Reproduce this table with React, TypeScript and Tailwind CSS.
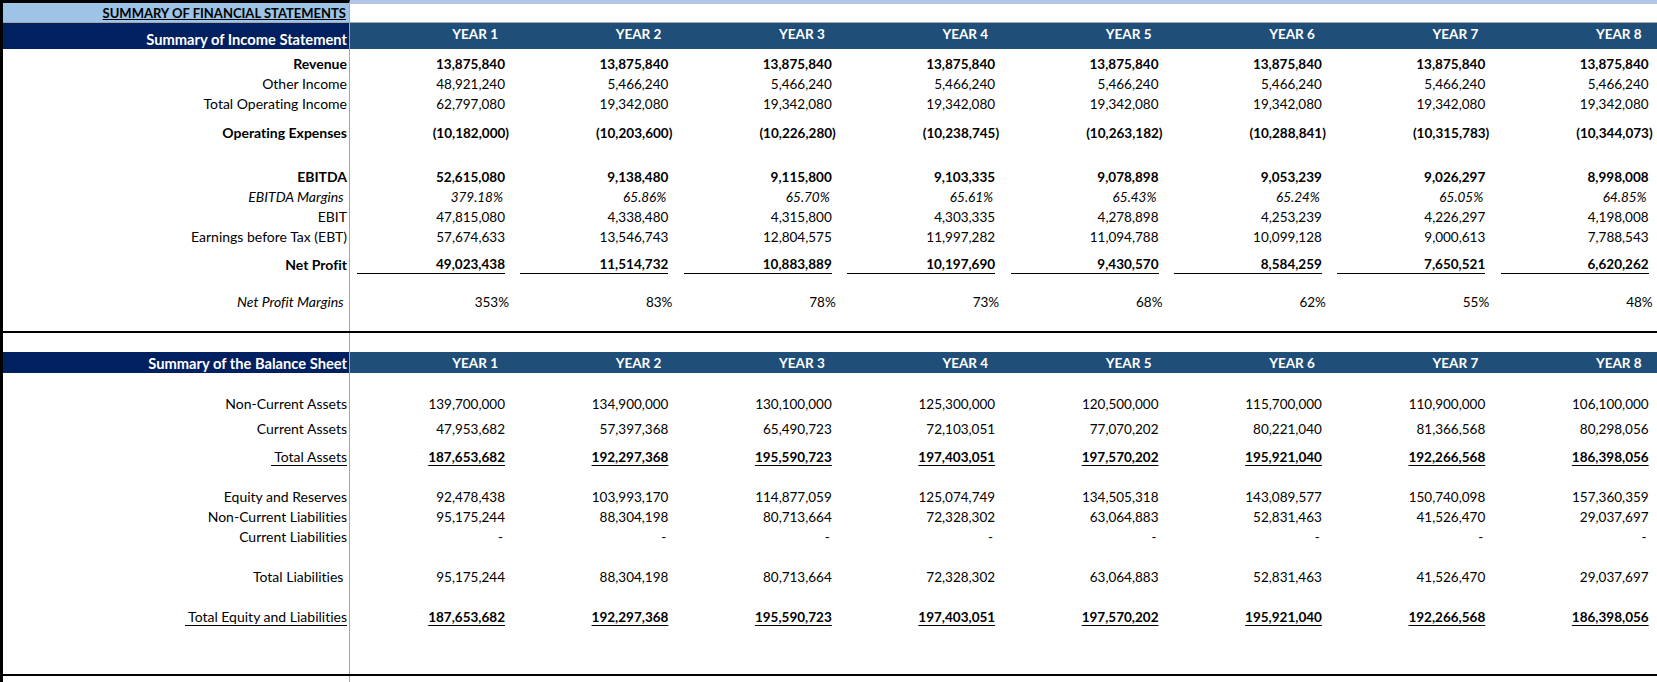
import React from "react";

const years = [1, 2, 3, 4, 5, 6, 7, 8];

interface RowProps {
  h: string;
  label?: React.ReactNode;
  labelCls?: string;
  values?: string[];
  valCls?: string;
  cellCls?: string;
}

function Row({ h, label, labelCls = "", values, valCls = "", cellCls = "" }: RowProps) {
  return (
    <div className={`flex shrink-0 ${h}`}>
      <div className={`w-[347px] shrink-0 border-r border-[#a6a6a6] flex items-center justify-end pr-[2px] whitespace-pre text-[14px] ${labelCls}`}>
        {label}
      </div>
      {values &&
        values.map((v, i) => (
          <div key={i} className="w-[163.375px] shrink-0 pl-[7px] pr-[8.375px] flex">
            <div className={`w-full flex items-center justify-end whitespace-nowrap ${cellCls}`}>
              <span className={valCls}>{v}</span>
            </div>
          </div>
        ))}
    </div>
  );
}

function Gap({ h }: { h: string }) {
  return <Row h={h} />;
}

function HeaderRow({ h, title, labelAlign, yearAlign }: { h: string; title: string; labelAlign: string; yearAlign: string }) {
  return (
    <div className={`flex shrink-0 ${h}`}>
      <div className={`w-[347px] shrink-0 bg-[#002060] border-r border-[#a6a6a6] flex justify-end pr-[2px] text-white font-bold text-[14.7px] ${labelAlign}`}>
        {title}
      </div>
      <div className="flex-1 flex bg-[#1f4e79]">
        {years.map((y) => (
          <div key={y} className="w-[163.375px] shrink-0 pl-[7px] pr-[8.375px] flex">
            <div className={`w-full flex justify-end pr-[7px] text-white font-bold ${yearAlign}`}>YEAR {y}</div>
          </div>
        ))}
      </div>
    </div>
  );
}

const rev = Array(8).fill("13,875,840");
const otherInc = ["48,921,240", ...Array(7).fill("5,466,240")];
const totInc = ["62,797,080", ...Array(7).fill("19,342,080")];
const opex = ["(10,182,000)", "(10,203,600)", "(10,226,280)", "(10,238,745)", "(10,263,182)", "(10,288,841)", "(10,315,783)", "(10,344,073)"];
const ebitda = ["52,615,080", "9,138,480", "9,115,800", "9,103,335", "9,078,898", "9,053,239", "9,026,297", "8,998,008"];
const ebitdaM = ["379.18%", "65.86%", "65.70%", "65.61%", "65.43%", "65.24%", "65.05%", "64.85%"];
const ebit = ["47,815,080", "4,338,480", "4,315,800", "4,303,335", "4,278,898", "4,253,239", "4,226,297", "4,198,008"];
const ebt = ["57,674,633", "13,546,743", "12,804,575", "11,997,282", "11,094,788", "10,099,128", "9,000,613", "7,788,543"];
const netProfit = ["49,023,438", "11,514,732", "10,883,889", "10,197,690", "9,430,570", "8,584,259", "7,650,521", "6,620,262"];
const npm = ["353%", "83%", "78%", "73%", "68%", "62%", "55%", "48%"];

const nca = ["139,700,000", "134,900,000", "130,100,000", "125,300,000", "120,500,000", "115,700,000", "110,900,000", "106,100,000"];
const ca = ["47,953,682", "57,397,368", "65,490,723", "72,103,051", "77,070,202", "80,221,040", "81,366,568", "80,298,056"];
const totAssets = ["187,653,682", "192,297,368", "195,590,723", "197,403,051", "197,570,202", "195,921,040", "192,266,568", "186,398,056"];
const equity = ["92,478,438", "103,993,170", "114,877,059", "125,074,749", "134,505,318", "143,089,577", "150,740,098", "157,360,359"];
const ncl = ["95,175,244", "88,304,198", "80,713,664", "72,328,302", "63,064,883", "52,831,463", "41,526,470", "29,037,697"];
const cl = Array(8).fill("-");

export default function App() {
  return (
    <div className="w-[1657px] h-[682px] overflow-hidden bg-white border-l-[3px] border-black flex flex-col text-[13.5px] leading-[16px] text-black font-['Lato',sans-serif] [font-variant-ligatures:none]">
      {/* title row */}
      <div className="flex shrink-0 h-[23px] border-b border-[#a6a6a6]">
        <div className="w-[347px] shrink-0 bg-[#9dc3e6] border-t-[3px] border-t-black border-r border-r-[#a6a6a6] flex items-end justify-end pr-[3px] pb-[1px] font-bold underline text-[13px]">
          SUMMARY OF FINANCIAL STATEMENTS
        </div>
        <div className="flex-1 flex flex-col">
          <div className="h-[4px] bg-[#b4c6e7]" />
        </div>
      </div>

      <HeaderRow h="h-[26px]" title="Summary of Income Statement" labelAlign="items-end pb-[2px]" yearAlign="items-start pt-[3px]" />
      <Gap h="h-[5px]" />
      <Row h="h-[20px]" label="Revenue" labelCls="font-bold" values={rev} valCls="font-bold" />
      <Row h="h-[20px]" label="Other Income" values={otherInc} />
      <Row h="h-[20px]" label="Total Operating Income" values={totInc} />
      <Gap h="h-[9px]" />
      <Row h="h-[20px]" label="Operating Expenses" labelCls="font-bold" values={opex} valCls="font-bold mr-[-4px]" />
      <Gap h="h-[24px]" />
      <Row h="h-[20px]" label="EBITDA" labelCls="font-bold" values={ebitda} valCls="font-bold" />
      <Row h="h-[20px]" label="EBITDA Margins " labelCls="italic" values={ebitdaM} valCls="italic mr-[2px]" />
      <Row h="h-[20px]" label="EBIT" values={ebit} />
      <Row h="h-[20px]" label="Earnings before Tax (EBT)" values={ebt} />
      <Gap h="h-[8px]" />
      <Row h="h-[19px]" label="Net Profit" labelCls="font-bold" values={netProfit} valCls="font-bold" cellCls="border-b border-black" />
      <Gap h="h-[18px]" />
      <Row h="h-[20px]" label="Net Profit Margins " labelCls="italic" values={npm} valCls="mr-[-4px]" />
      <Gap h="h-[19px]" />
      <div className="h-[2px] shrink-0 bg-black" />
      <Gap h="h-[19px]" />

      <HeaderRow h="h-[21px]" title="Summary of the Balance Sheet" labelAlign="items-center" yearAlign="items-center" />
      <Gap h="h-[21px]" />
      <Row h="h-[20px]" label="Non-Current Assets" values={nca} />
      <Gap h="h-[5px]" />
      <Row h="h-[20px]" label="Current Assets" values={ca} />
      <Gap h="h-[8px]" />
      <Row h="h-[20px]" label={<span className="underline underline-offset-[3px]">{"\u00a0Total Assets"}</span>} values={totAssets} valCls="font-bold underline underline-offset-[3px]" />
      <Gap h="h-[20px]" />
      <Row h="h-[20px]" label="Equity and Reserves" values={equity} />
      <Row h="h-[20px]" label="Non-Current Liabilities" values={ncl} />
      <Row h="h-[20px]" label="Current Liabilities" values={cl} valCls="mr-[2px]" />
      <Gap h="h-[20px]" />
      <Row h="h-[20px]" label="Total Liabilities " values={ncl} />
      <Gap h="h-[20px]" />
      <Row h="h-[20px]" label={<span className="underline underline-offset-[3px]">{"\u00a0Total Equity and Liabilities"}</span>} values={totAssets} valCls="font-bold underline underline-offset-[3px]" />
      <Gap h="h-[47px]" />
      <div className="h-[2px] shrink-0 bg-black" />
      <Gap h="h-[6px]" />
    </div>
  );
}
